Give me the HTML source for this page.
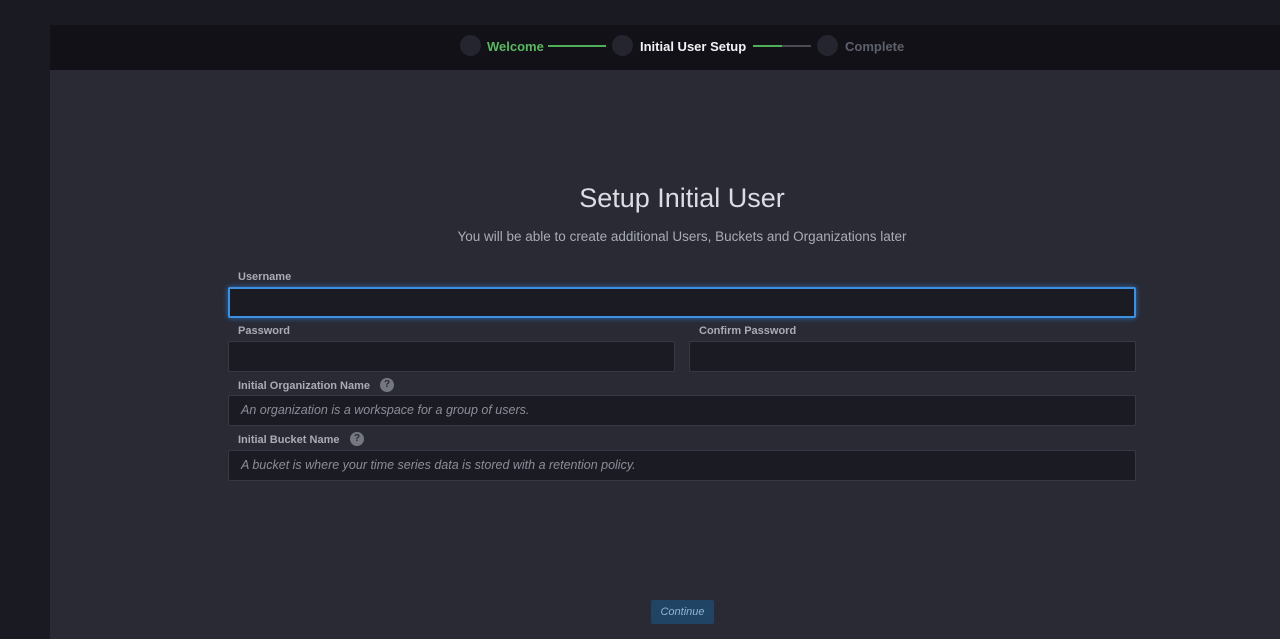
<!DOCTYPE html>
<html><head><style>
body{margin:0;width:1280px;height:639px;background:#1a1a23;font-family:"Liberation Sans",sans-serif;overflow:hidden;position:relative}
.hdr{position:absolute;left:50px;top:25px;width:1230px;height:45px;background:#111117}
.main{position:absolute;left:50px;top:70px;width:1230px;height:569px;background:#292a34}
.dot{position:absolute;top:35px;width:21px;height:21px;border-radius:50%;background:#24252e}
.st{position:absolute;top:39px;font-size:13px;font-weight:bold}
.ln{position:absolute;top:45px;height:2px}
h1{position:absolute;top:183px;left:82px;width:1200px;text-align:center;margin:0;font-weight:normal;font-size:27px;color:#dcdde4}
.sub{position:absolute;top:229px;left:82px;width:1200px;text-align:center;font-size:13.5px;color:#a9abb6}
.lb{position:absolute;font-size:11px;font-weight:bold;color:#a9abb6}
.in{position:absolute;height:28px;background:#1b1c23;border:1px solid #373844;border-radius:2px;box-sizing:border-box;font-style:italic;font-size:12.5px;color:#8b8d99;padding:7px 12px}
.q{position:absolute;width:14px;height:14px;border-radius:50%;background:#75777f;color:#292a34;font-size:10px;font-weight:bold;text-align:center;line-height:14px}
.btn{position:absolute;left:651px;top:600px;width:63px;height:24px;background:#1f4464;color:#8fb3d3;font-style:italic;font-size:11px;text-align:center;line-height:24px;border-radius:2px}
</style></head><body>
<div class="hdr"></div><div class="main"></div>
<div class="dot" style="left:460px"></div>
<div class="st" style="left:487px;color:#5ab85f">Welcome</div>
<div class="ln" style="left:548px;width:58px;background:#4fae57"></div>
<div class="dot" style="left:612px"></div>
<div class="st" style="left:640px;color:#f2f2f5">Initial User Setup</div>
<div class="ln" style="left:753px;width:29px;background:#4fae57"></div>
<div class="ln" style="left:782px;width:29px;background:#4a4b55"></div>
<div class="dot" style="left:817px"></div>
<div class="st" style="left:845px;color:#5e606b">Complete</div>
<h1>Setup Initial User</h1>
<div class="sub">You will be able to create additional Users, Buckets and Organizations later</div>
<div class="lb" style="left:238px;top:271px">Username</div>
<div class="in" style="left:228px;top:287px;width:908px;height:31px;border:2px solid #3d8fe0;box-shadow:0 0 6px #2f6fb8"></div>
<div class="lb" style="left:238px;top:325px">Password</div>
<div class="in" style="left:228px;top:341px;width:447px;height:31px"></div>
<div class="lb" style="left:699px;top:325px">Confirm Password</div>
<div class="in" style="left:689px;top:341px;width:447px;height:31px"></div>
<div class="lb" style="left:238px;top:380px">Initial Organization Name</div>
<div class="q" style="left:380px;top:378px">?</div>
<div class="in" style="left:228px;top:395px;width:908px;height:31px">An organization is a workspace for a group of users.</div>
<div class="lb" style="left:238px;top:434px">Initial Bucket Name</div>
<div class="q" style="left:350px;top:432px">?</div>
<div class="in" style="left:228px;top:450px;width:908px;height:31px">A bucket is where your time series data is stored with a retention policy.</div>
<div class="btn">Continue</div>
</body></html>
